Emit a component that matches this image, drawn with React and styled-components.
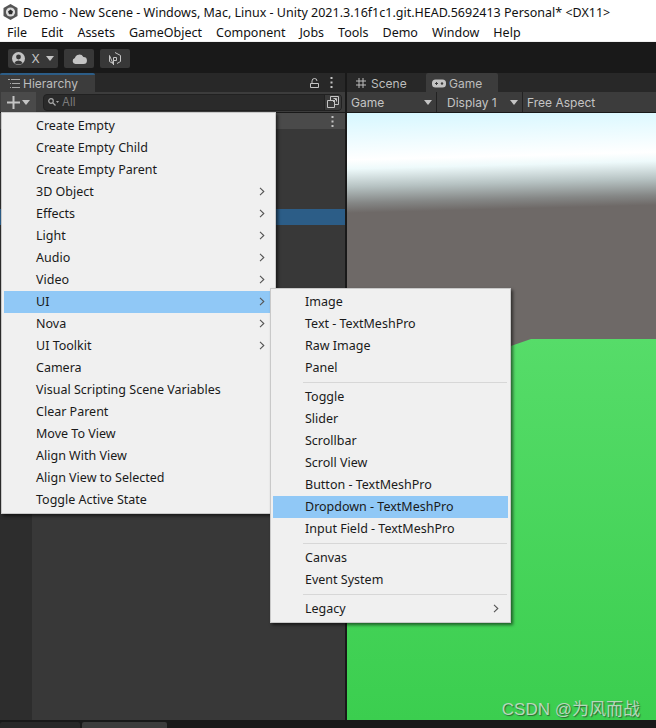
import styled, { createGlobalStyle } from "styled-components";

const GlobalStyle = createGlobalStyle`
  html, body {
    margin: 0;
    padding: 0;
    background: #191919;
  }
  * {
    box-sizing: border-box;
  }
`;

const Page = styled.div`
  position: relative;
  width: 656px;
  height: 728px;
  overflow: hidden;
  display: flex;
  flex-direction: column;
  background: #191919;
  font-family: Inter, "Liberation Sans", sans-serif;
`;

const TitleBar = styled.div`
  height: 24px;
  background: #fff;
  display: flex;
  align-items: center;
  gap: 5px;
  padding-left: 3px;
  font-family: "Noto Sans", sans-serif;
  font-size: 12.5px;
  color: #111;
  white-space: nowrap;
`;

const MenuBar = styled.div`
  height: 18px;
  background: #fff;
  border-bottom: 1px solid #f0f0f0;
  display: flex;
  align-items: center;
  gap: 14px;
  padding-left: 7px;
  font-family: "Noto Sans", sans-serif;
  font-size: 12.5px;
  color: #111;
`;

const Toolbar = styled.div`
  height: 31px;
  display: flex;
  align-items: flex-start;
  gap: 6px;
  padding: 7px 0 0 8px;
  background: #191919;
`;

const ToolButton = styled.div`
  width: ${(p) => p.$w}px;
  height: 19px;
  border-radius: 2px;
  background: #383838;
  display: flex;
  align-items: center;
  justify-content: center;
  gap: 6px;
  color: #c4c4c4;
  font-size: 12px;
`;

const Panels = styled.div`
  height: 647px;
  display: flex;
  gap: 2px;
`;

const Panel = styled.div`
  width: ${(p) => p.$w}px;
  display: flex;
  flex-direction: column;
`;

const TabStrip = styled.div`
  height: 19px;
  background: #282828;
  display: flex;
  align-items: stretch;
`;

const Tab = styled.div`
  width: ${(p) => p.$w}px;
  display: flex;
  align-items: center;
  gap: ${(p) => p.$gap}px;
  padding-left: ${(p) => p.$pad}px;
  font-size: 12px;
  color: #bdbdbd;
  background: ${(p) => (p.$active ? "#3c3c3c" : "transparent")};
  border-top: ${(p) => (p.$blue ? "2px solid #2c5d87" : "1px solid transparent")};
  border-radius: 2px 2px 0 0;
`;

const TabSpacer = styled.div`
  flex: 1;
  display: flex;
  align-items: center;
  justify-content: flex-end;
  gap: 11px;
  padding-right: 12px;
`;

const PanelBar = styled.div`
  height: 20px;
  background: #3c3c3c;
  display: flex;
  align-items: center;
`;

const PlusButton = styled.div`
  width: 35px;
  height: 20px;
  margin-left: 1px;
  background: #4a4a4a;
  display: flex;
  align-items: center;
  justify-content: center;
  gap: 2px;
`;

const SearchField = styled.div`
  width: 299px;
  height: 17px;
  margin-left: 7px;
  border-radius: 4px;
  border: 1px solid #212121;
  background: #2a2a2a;
  display: flex;
  align-items: center;
  padding-left: 4px;
  gap: 3px;
  font-size: 11.5px;
  color: #7c7c7c;
`;

const SearchAction = styled.div`
  margin-left: auto;
  width: 17px;
  height: 15px;
  border-left: 1px solid #212121;
  background: #3a3a3a;
  display: flex;
  align-items: center;
  justify-content: center;
  border-radius: 0 3px 3px 0;
`;

const SceneHeader = styled.div`
  height: 16px;
  margin-top: 1px;
  background: #4a4a4a;
  display: flex;
  align-items: center;
  justify-content: flex-end;
  padding-right: 11px;
`;

const SceneList = styled.div`
  height: 591px;
  background: #383838;
  display: flex;
  flex-direction: column;
  padding-top: 80px;
  border-left: 32px solid #2d2d2d;
`;

const SelectedRow = styled.div`
  height: 16px;
  margin-left: -32px;
  background: #2c5d87;
`;

const GameBar = styled(PanelBar)`
  border-bottom: 1px solid #191919;
  height: 21px;
  color: #c4c4c4;
  font-size: 12px;
`;

const Dropdown = styled.div`
  width: ${(p) => p.$w}px;
  height: 100%;
  display: flex;
  align-items: center;
  justify-content: space-between;
  padding: 0 ${(p) => (p.$plain ? 0 : 4)}px 0 ${(p) => p.$pad}px;
  border-right: 1px solid ${(p) => (p.$plain ? "transparent" : "#222")};
`;

const GameCanvas = styled.svg`
  display: block;
  width: 309px;
  height: 607px;
`;

const BottomStrip = styled.div`
  flex: 1;
  display: flex;
  gap: 2px;
  padding-top: 2px;
`;

const BottomTab = styled.div`
  width: ${(p) => p.$w}px;
  background: ${(p) => p.$bg};
  border-radius: 2px 2px 0 0;
`;

const Menu = styled.div`
  position: absolute;
  left: ${(p) => p.$x}px;
  top: ${(p) => p.$y}px;
  width: ${(p) => p.$w}px;
  padding: 2px;
  background: #f0f0f0;
  border: 1px solid #c9c9c9;
  box-shadow: 2px 2px 3px rgba(0, 0, 0, 0.55);
  font-family: "Noto Sans", sans-serif;
  font-size: 12.5px;
  color: #1a1a1a;
`;

const MenuRow = styled.div`
  height: 22px;
  display: flex;
  align-items: center;
  justify-content: space-between;
  padding: 0 ${(p) => p.$arrow}px 1px 32px;
  background: ${(p) => (p.$active ? "#90c8f6" : "transparent")};
  white-space: nowrap;
`;

const MenuSeparator = styled.div`
  height: 7px;
  margin-left: 30px;
  margin-right: 1px;
  display: flex;
  align-items: center;
  &::before {
    content: "";
    flex: 1;
    height: 1px;
    background: #d7d7d7;
  }
`;

const Watermark = styled.div`
  position: absolute;
  right: 16px;
  top: 698px;
  font-family: "Liberation Sans", "Noto Sans CJK SC", sans-serif;
  font-size: 17px;
  line-height: 24px;
  color: #b7d8bb;
  text-shadow: 1px 1px 1px rgba(40, 60, 40, 0.7);
  white-space: nowrap;
`;

const mainItems = [
  ["Create Empty"],
  ["Create Empty Child"],
  ["Create Empty Parent"],
  ["3D Object", true],
  ["Effects", true],
  ["Light", true],
  ["Audio", true],
  ["Video", true],
  ["UI", true, true],
  ["Nova", true],
  ["UI Toolkit", true],
  ["Camera"],
  ["Visual Scripting Scene Variables"],
  ["Clear Parent"],
  ["Move To View"],
  ["Align With View"],
  ["Align View to Selected"],
  ["Toggle Active State"],
];

const subItems = [
  ["Image"],
  ["Text - TextMeshPro"],
  ["Raw Image"],
  ["Panel"],
  null,
  ["Toggle"],
  ["Slider"],
  ["Scrollbar"],
  ["Scroll View"],
  ["Button - TextMeshPro"],
  ["Dropdown - TextMeshPro", false, true],
  ["Input Field - TextMeshPro"],
  null,
  ["Canvas"],
  ["Event System"],
  null,
  ["Legacy", true],
];

const menuNames = ["File", "Edit", "Assets", "GameObject", "Component", "Jobs", "Tools", "Demo", "Window", "Help"];

function Chevron() {
  return (
    <svg width="6" height="9" viewBox="0 0 6 9" fill="none" stroke="#555" strokeWidth="1.1">
      <path d="M1 .8 4.8 4.5 1 8.2" />
    </svg>
  );
}

function Caret({ color = "#c4c4c4" }) {
  return (
    <svg width="8" height="5" viewBox="0 0 8 5" fill={color}>
      <path d="M0 0h8L4 5z" />
    </svg>
  );
}

function Kebab() {
  return (
    <svg width="3" height="11" viewBox="0 0 3 11" fill="#c4c4c4">
      <rect x=".5" width="2" height="2" />
      <rect x=".5" y="4.500" width="2" height="2" />
      <rect x=".5" y="9" width="2" height="2" />
    </svg>
  );
}

function UnityLogo() {
  return (
    <svg width="15" height="16" viewBox="0 0 15 16">
      <path d="M7.500 0 14.500 4v8l-7 4-7-4V4z" fill="#555" />
      <circle cx="7.500" cy="8" r="4.600" fill="#dcdcdc" />
      <path d="M7.500 5.500 10 7.400 9 10.300H6L5 7.400z" fill="#2e2e2e" />
    </svg>
  );
}

function MenuList({ items, arrow }) {
  return items.map((item, i) =>
    item ? (
      <MenuRow key={item[0]} $active={item[2]} $arrow={arrow}>
        {item[0]}
        {item[1] && <Chevron />}
      </MenuRow>
    ) : (
      <MenuSeparator key={i} />
    )
  );
}

export default function App() {
  return (
    <Page>
      <GlobalStyle />
      <TitleBar>
        <UnityLogo />
        Demo - New Scene - Windows, Mac, Linux - Unity 2021.3.16f1c1.git.HEAD.5692413 Personal* &lt;DX11&gt;
      </TitleBar>
      <MenuBar>
        {menuNames.map((name) => (
          <span key={name}>{name}</span>
        ))}
      </MenuBar>
      <Toolbar>
        <ToolButton $w={50}>
          <svg width="13" height="13" viewBox="0 0 13 13">
            <circle cx="6.500" cy="6.500" r="6.500" fill="#c4c4c4" />
            <circle cx="6.500" cy="5" r="2.400" fill="#383838" />
            <path d="M2.400 11a4.300 3.600 0 0 1 8.200 0 6 6 0 0 1-8.200 0z" fill="#383838" />
          </svg>
          X
          <Caret />
        </ToolButton>
        <ToolButton $w={30}>
          <svg width="15" height="10" viewBox="0 0 15 10" fill="#c4c4c4">
            <path d="M3.500 10a3 3 0 0 1-.6-5.900A4.600 4.600 0 0 1 11.400 3 3.500 3.500 0 0 1 11.500 10z" />
          </svg>
        </ToolButton>
        <ToolButton $w={30}>
          <svg width="14" height="15" viewBox="0 0 14 15" fill="none" stroke="#c4c4c4">
            <path d="M7 1.500 12.500 4.500v6L9 12.500M5 12.500 1.500 10.500v-6z" />
            <path d="M5.500 14V6.500h3v3h-3" />
          </svg>
        </ToolButton>
      </Toolbar>
      <Panels>
        <Panel $w={345}>
          <TabStrip>
            <Tab $w={95} $pad={8} $gap={3} $active $blue>
              <svg width="12" height="9" viewBox="0 0 12 9" fill="#a8a8a8">
                <rect width="2" height="1" />
                <rect x="3" width="9" height="1" />
                <rect x="2" y="4" width="1" height="1" />
                <rect x="4" y="4" width="8" height="1" />
                <rect x="2" y="8" width="1" height="1" />
                <rect x="4" y="8" width="8" height="1" />
              </svg>
              Hierarchy
            </Tab>
            <TabSpacer>
              <svg width="9" height="10" viewBox="0 0 9 10" fill="none" stroke="#c4c4c4">
                <path d="M.5 5.500h8v4h-8zM2 5.500V3a2.500 2.500 0 0 1 5 0" />
              </svg>
              <Kebab />
            </TabSpacer>
          </TabStrip>
          <PanelBar>
            <PlusButton>
              <svg width="13" height="13" viewBox="0 0 13 13" fill="#c4c4c4">
                <path d="M5.500 0h2v5.500H13v2H7.500V13h-2V7.500H0v-2h5.500z" />
              </svg>
              <Caret />
            </PlusButton>
            <SearchField>
              <svg width="11" height="9" viewBox="0 0 11 9" fill="none" stroke="#a8a8a8" strokeWidth="1.2">
                <circle cx="3" cy="3" r="2.300" />
                <path d="m5 5 2.500 2.500" />
                <path d="M8 3h3L9.500 5z" fill="#a8a8a8" stroke="none" />
              </svg>
              All
              <SearchAction>
                <svg width="12" height="12" viewBox="0 0 12 12" fill="none" stroke="#c4c4c4">
                  <path d="M3.500 4V.5h8v8H8M.5 4.500h7v7h-7zM6 6l3-3M6.500 2.500H9.500V5.500" />
                </svg>
              </SearchAction>
            </SearchField>
          </PanelBar>
          <SceneHeader>
            <Kebab />
          </SceneHeader>
          <SceneList>
            <SelectedRow />
          </SceneList>
        </Panel>
        <Panel $w={309}>
          <TabStrip>
            <Tab $w={79} $pad={9} $gap={5}>
              <svg width="10" height="10" viewBox="0 0 10 10" fill="none" stroke="#bdbdbd">
                <path d="M3 0v10M7 0v10M0 3h10M0 7h10" />
              </svg>
              Scene
            </Tab>
            <Tab $w={72} $pad={6} $gap={3} $active>
              <svg width="14" height="9" viewBox="0 0 14 9">
                <rect width="14" height="8" y=".5" rx="3.500" fill="#c4c4c4" />
                <path d="M3 4.500h3M4.500 3v3" stroke="#3c3c3c" />
                <circle cx="10" cy="4.500" r="1.200" fill="#3c3c3c" />
              </svg>
              Game
            </Tab>
          </TabStrip>
          <GameBar>
            <Dropdown $w={90} $pad={4}>
              Game
              <Caret />
            </Dropdown>
            <Dropdown $w={86} $pad={10}>
              Display 1
              <Caret />
            </Dropdown>
            <Dropdown $w={90} $pad={4} $plain>
              Free Aspect
            </Dropdown>
          </GameBar>
          <GameCanvas viewBox="0 0 309 607" preserveAspectRatio="none">
            <defs>
              <linearGradient id="sky" gradientUnits="userSpaceOnUse" x1="0" y1="0" x2="2.600" y2="100">
                <stop offset="0" stopColor="#d6f7ff" />
                <stop offset="0.47" stopColor="#ffffff" />
                <stop offset="0.56" stopColor="#eefafb" />
                <stop offset="0.74" stopColor="#b6c2c2" />
                <stop offset="0.9" stopColor="#858786" />
                <stop offset="1" stopColor="#6e6967" />
              </linearGradient>
              <linearGradient id="grass" x1="0" y1="0" x2="0" y2="1">
                <stop offset="0" stopColor="#56dc69" />
                <stop offset="1" stopColor="#3bce4f" />
              </linearGradient>
            </defs>
            <rect width="309" height="607" fill="url(#sky)" />
            <path d="M0 607V290L184 226H309V607z" fill="url(#grass)" />
          </GameCanvas>
        </Panel>
      </Panels>
      <BottomStrip>
        <BottomTab $w={80} $bg="#282828" />
        <BottomTab $w={85} $bg="#3c3c3c" />
      </BottomStrip>

      <Menu $x={1} $y={112} $w={275}>
        <MenuList items={mainItems} arrow={8} />
      </Menu>
      <Menu $x={270} $y={288} $w={241}>
        <MenuList items={subItems} arrow={9} />
      </Menu>
      <Watermark>CSDN @为风而战</Watermark>
    </Page>
  );
}
